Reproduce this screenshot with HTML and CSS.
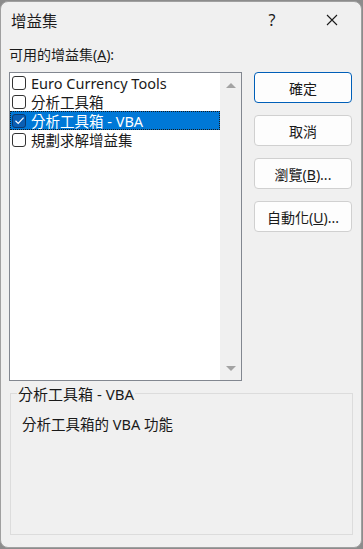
FILE: index.html
```html
<!DOCTYPE html>
<html lang="zh-Hant">
<head>
    <meta charset="UTF-8">
    <title>增益集</title>
    <link rel="stylesheet" href="styles.css">
</head>
<body>
    <div class="dialog">
        <div class="titlebar">
            <span class="title">增益集</span>
            <span class="help">?</span>
            <span class="close">
                <svg width="12" height="12" viewBox="0 0 12 12"><path d="M1 1 L11 11 M11 1 L1 11" stroke="#1a1a1a" stroke-width="1.1" fill="none"/></svg>
            </span>
        </div>

        <div class="content">
            <div class="main">
                <div class="left">
                    <div class="label">可用的增益集(<u>A</u>):</div>
                    <div class="listbox">
                        <ul class="items">
                            <li><span class="check"></span>Euro Currency Tools</li>
                            <li><span class="check"></span>分析工具箱</li>
                            <li class="selected">
                                <span class="check checked">
                                    <svg width="11" height="11" viewBox="0 0 11 11"><path d="M1.5 5.8 L4.2 8.4 L9.6 2.6" stroke="#fff" stroke-width="1.2" fill="none"/></svg>
                                </span>分析工具箱 - VBA
                            </li>
                            <li><span class="check"></span>規劃求解增益集</li>
                        </ul>
                        <div class="scrollbar">
                            <span class="arrow up"></span>
                            <span class="arrow down"></span>
                        </div>
                    </div>
                </div>
                <div class="buttons">
                    <button class="btn default">確定</button>
                    <button class="btn">取消</button>
                    <button class="btn">瀏覽(<u>B</u>)...</button>
                    <button class="btn">自動化(<u>U</u>)...</button>
                </div>
            </div>

            <fieldset class="group">
                <legend>分析工具箱 - VBA</legend>
                <p class="desc">分析工具箱的 VBA 功能</p>
            </fieldset>
        </div>
    </div>
</body>
</html>
```

FILE: styles.css
```css
body {
    margin: 0;
    padding-top: 1px;
    background-color: #8c8c8c;
    font-family: "Noto Sans", "Noto Sans CJK TC", sans-serif;
    color: #1a1a1a;
}
.dialog {
    box-sizing: border-box;
    width: 362px;
    height: 547px;
    background-color: #f0f0f0;
    border: 1px solid #a0a0a0;
    border-radius: 8px;
}
.titlebar {
    display: flex;
    align-items: center;
    height: 36px;
    padding-left: 10px;
}
.title {
    flex: 1;
    font-size: 15.5px;
}
.help {
    width: 58px;
    text-align: center;
    font-size: 16px;
    margin-right: 2px;
}
.close {
    width: 58px;
    display: flex;
    justify-content: center;
}
.content {
    padding: 0 9px 0 8px;
}
.main {
    display: flex;
    gap: 12px;
}
.left {
    width: 233px;
}
.label {
    font-size: 14px;
    height: 34px;
    line-height: 34px;
}
.listbox {
    display: flex;
    height: 307px;
    background: #fff;
    border: 1px solid #828790;
}
.items {
    flex: 1;
    list-style: none;
    margin: 0;
    padding: 0;
}
.items li {
    display: flex;
    align-items: center;
    height: 19px;
    font-size: 14.5px;
    white-space: nowrap;
}
.items li.selected {
    background-color: #0078d7;
    color: #fff;
    outline: 1px dotted #1a1a1a;
    outline-offset: -1px;
}
.check {
    box-sizing: border-box;
    width: 14px;
    height: 14px;
    margin: 0 5px 0 2px;
    border: 1px solid #333;
    border-radius: 3px;
    background: #fff;
    display: flex;
    align-items: center;
    justify-content: center;
}
.check.checked {
    background: #0a5fb4;
    border-color: #0a3a70;
}
.scrollbar {
    width: 21px;
    background-color: #f0f0f0;
    display: flex;
    flex-direction: column;
    justify-content: space-between;
    align-items: center;
    padding: 10px 0 9px;
}
.arrow {
    width: 0;
    height: 0;
    border-left: 5px solid transparent;
    border-right: 5px solid transparent;
}
.arrow.up {
    border-bottom: 5px solid #a3a3a3;
}
.arrow.down {
    border-top: 5px solid #a3a3a3;
}
.buttons {
    display: flex;
    flex-direction: column;
    gap: 12px;
    padding-top: 34px;
}
.btn {
    width: 98px;
    height: 31px;
    background: #fdfdfd;
    border: 1px solid #d0d0d0;
    border-radius: 4px;
    font-family: "Noto Sans", "Noto Sans CJK TC", sans-serif;
    font-size: 14px;
    color: #1a1a1a;
    padding: 0;
}
.btn.default {
    border: 1px solid #005fb8;
    box-shadow: inset 0 0 0 1px #ffffff;
}
.group {
    margin: 2px 0 0 1px;
    width: 343px;
    height: 152px;
    box-sizing: border-box;
    border: 1px solid #dcdcdc;
    padding: 0 0 0 11px;
}
.group legend {
    font-size: 15px;
    padding: 0 1px;
    margin-left: -5px;
}
.desc {
    margin: 9px 0 0;
    font-size: 14.5px;
}
```
